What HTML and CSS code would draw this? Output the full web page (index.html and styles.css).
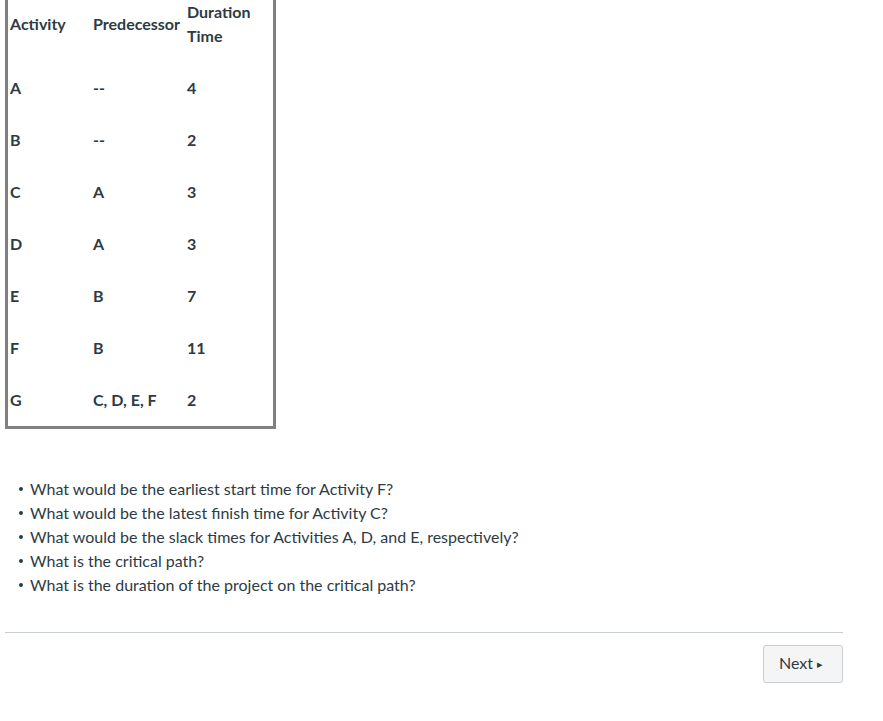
FILE: index.html
```html
<!DOCTYPE html>
<html>
<head>
<meta charset="utf-8">
<link rel="stylesheet" href="styles.css">
</head>
<body>
<div class="page">
  <table class="cpm">
    <colgroup>
      <col class="c1"><col class="c2"><col class="c3">
    </colgroup>
    <tr class="head"><td>Activity</td><td>Predecessor</td><td>Duration Time</td></tr>
    <tr><td>A</td><td>--</td><td>4</td></tr>
    <tr><td>B</td><td>--</td><td>2</td></tr>
    <tr><td>C</td><td>A</td><td>3</td></tr>
    <tr><td>D</td><td>A</td><td>3</td></tr>
    <tr><td>E</td><td>B</td><td>7</td></tr>
    <tr><td>F</td><td>B</td><td>11</td></tr>
    <tr><td>G</td><td>C, D, E, F</td><td>2</td></tr>
  </table>
  <ul class="questions">
    <li>What would be the earliest start time for Activity F?</li>
    <li>What would be the latest finish time for Activity C?</li>
    <li>What would be the slack times for Activities A, D, and E, respectively?</li>
    <li>What is the critical path?</li>
    <li>What is the duration of the project on the critical path?</li>
  </ul>
  <div class="footer">
    <button class="next">Next <span class="tri">&#9656;</span></button>
  </div>
</div>
</body>
</html>
```

FILE: styles.css
```css
html, body { margin: 0; padding: 0; background: #fff; }
body {
  font-family: Lato, "Noto Sans", sans-serif;
  color: #2d3b45;
}
.page {
  width: 838px;
  margin-left: 5px;
}
.cpm {
  margin-top: -17px;
  border-collapse: separate;
  border-spacing: 0;
  border: 3px solid #808080;
  width: 271px;
  table-layout: fixed;
}
.c1 { width: 83px; }
.c2 { width: 94px; }
.c3 { width: 88px; }
.cpm td {
  padding: 0 2px;
  height: 52px;
  font-size: 16px;
  font-weight: 700;
  line-height: 24px;
  vertical-align: middle;
}
.cpm .head td {
  height: 76px;
}
.questions {
  margin: 48px 0 0 0;
  padding-left: 25px;
  font-size: 16px;
  line-height: 24px;
  list-style: none;
}
.questions li::before {
  content: "";
  display: inline-block;
  width: 4px;
  height: 4px;
  border-radius: 50%;
  background: #2d3b45;
  margin-left: -11px;
  margin-right: 7px;
  vertical-align: 4px;
}
.footer {
  margin-top: 35px;
  border-top: 1px solid #c7cdd1;
  padding-top: 12px;
  display: flex;
  justify-content: flex-end;
}
.next {
  width: 80px;
  height: 38px;
  background: #f5f5f5;
  border: 1px solid #c7cdd1;
  border-radius: 3px;
  font-family: Lato, "Noto Sans", sans-serif;
  font-size: 16px;
  line-height: 20px;
  color: #2d3b45;
  text-align: left;
  padding: 0 0 1px 15px;
}
.tri { font-size: 11px; position: relative; top: -1px; }
```
